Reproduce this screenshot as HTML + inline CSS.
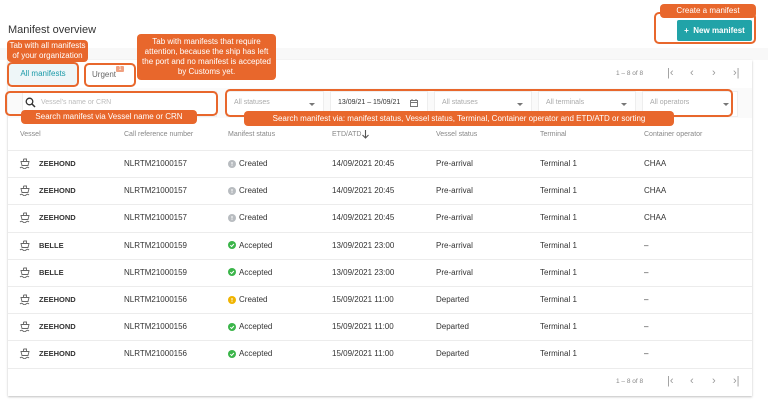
<!DOCTYPE html>
<html><head><meta charset="utf-8"><style>
*{margin:0;padding:0;box-sizing:border-box}
body{width:768px;height:402px;background:#fff;font-family:"Liberation Sans",sans-serif;position:relative;overflow:hidden;color:#333}
.a{position:absolute;white-space:nowrap}
.or{background:#e8672c;color:#fff;border-radius:4px;text-align:center;font-size:8px;line-height:10px}
.ob{border:2.5px solid #e8672c;border-radius:5px}
.h{font-size:7px;color:#888}
.c{font-size:8px;color:#333}
.sel{background:#fff;border:1px solid #eee;font-size:7px;color:#aaa;padding:7px 7px;height:26px}
.sel b{position:absolute;right:8px;top:11px;border:3px solid transparent;border-top:3px solid #777}
.row{position:absolute;left:8px;width:744px;height:27px;border-top:1px solid #ececec}
.pg{font-size:11px;color:#999}
</style></head><body>
<div class="a" style="left:0;top:48px;width:768px;height:12px;background:#f8f8f8"></div>
<div class="a" style="left:8px;top:24px;font-size:11px;color:#333">Manifest overview</div>

<div class="a" style="left:8px;top:60px;width:744px;height:336px;background:#fff;box-shadow:0 1px 2px rgba(0,0,0,.25)"></div>
<div class="a" style="left:8px;top:88px;width:744px;height:30px;background:#fafafa"></div>
<div class="a" style="left:8px;top:62px;width:70px;height:24px;background:#eef6f8;color:#1a9aa8;font-size:8px;text-align:center;line-height:24px">All manifests</div>
<div class="a" style="left:92px;top:70px;font-size:8px;color:#666">Urgent</div>
<div class="a" style="left:116px;top:66px;width:8px;height:6px;background:#f0a080;border-radius:1px;font-size:5px;color:#fff;text-align:center;line-height:6px">1</div>

<div class="a" style="left:616px;top:70px;font-size:6.5px;color:#888">1 – 8 of 8</div>
<div class="a pg" style="left:667px;top:67px">|‹</div>
<div class="a pg" style="left:690px;top:67px">‹</div>
<div class="a pg" style="left:712px;top:67px">›</div>
<div class="a pg" style="left:733px;top:67px">›|</div>

<div class="a sel" style="left:22px;top:91px;width:195px;color:#bbb;padding-left:18px">Vessel's name or CRN</div>
<svg class="a" style="left:25px;top:97px" width="11" height="11" viewBox="0 0 11 11"><circle cx="4.5" cy="4.5" r="3.3" fill="none" stroke="#333" stroke-width="1.3"/><path d="M7 7l3 3" stroke="#333" stroke-width="1.5"/></svg>
<div class="a sel" style="left:226px;top:91px;width:98px">All statuses<b></b></div>
<div class="a sel" style="left:330px;top:91px;width:98px;color:#333">13/09/21 – 15/09/21</div>
<svg class="a" style="left:410px;top:99px" width="8" height="8" viewBox="0 0 8 8"><rect x="0.5" y="1.5" width="7" height="6" fill="none" stroke="#777"/><path d="M0.5 3.5h7M2 0v2M6 0v2" stroke="#777"/></svg>
<div class="a sel" style="left:434px;top:91px;width:98px">All statuses<b></b></div>
<div class="a sel" style="left:538px;top:91px;width:98px">All terminals<b></b></div>
<div class="a sel" style="left:642px;top:91px;width:96px">All operators<b></b></div>

<div class="a h" style="left:20px;top:131px">Vessel</div>
<div class="a h" style="left:124px;top:131px">Call reference number</div>
<div class="a h" style="left:228px;top:131px">Manifest status</div>
<div class="a h" style="left:332px;top:131px">ETD/ATD</div>
<svg class="a" style="left:362px;top:130px" width="7" height="9" viewBox="0 0 7 9"><path d="M3.5 0v8M0.5 5l3 3 3-3" stroke="#555" stroke-width="1.1" fill="none"/></svg>
<div class="a h" style="left:436px;top:131px">Vessel status</div>
<div class="a h" style="left:540px;top:131px">Terminal</div>
<div class="a h" style="left:644px;top:131px">Container operator</div>

<div id="rows"></div>
<div class="row" style="top:368px;height:28px"></div>
<div class="a" style="left:616px;top:378px;font-size:6.5px;color:#888">1 – 8 of 8</div>
<div class="a pg" style="left:667px;top:375px">|‹</div>
<div class="a pg" style="left:690px;top:375px">‹</div>
<div class="a pg" style="left:712px;top:375px">›</div>
<div class="a pg" style="left:733px;top:375px">›|</div>

<script>
var d=[["ZEEHOND","NLRTM21000157","i","Created","14/09/2021 20:45","Pre-arrival","CHAA"],
["ZEEHOND","NLRTM21000157","i","Created","14/09/2021 20:45","Pre-arrival","CHAA"],
["ZEEHOND","NLRTM21000157","i","Created","14/09/2021 20:45","Pre-arrival","CHAA"],
["BELLE","NLRTM21000159","a","Accepted","13/09/2021 23:00","Pre-arrival","–"],
["BELLE","NLRTM21000159","a","Accepted","13/09/2021 23:00","Pre-arrival","–"],
["ZEEHOND","NLRTM21000156","w","Created","15/09/2021 11:00","Departed","–"],
["ZEEHOND","NLRTM21000156","a","Accepted","15/09/2021 11:00","Departed","–"],
["ZEEHOND","NLRTM21000156","a","Accepted","15/09/2021 11:00","Departed","–"]];
var h="";
d.forEach(function(r,i){
 var t=150+i*27.2;
 h+='<div class="row" style="top:'+t+'px"></div>';
 var y=t+9;
 h+='<svg class="a" style="left:19px;top:'+(y-1)+'px" width="12" height="11" viewBox="0 0 12 11"><path d="M4.5 1h3v2.5M4.5 1v2.5M2 3.5h8l-1 4H3z" fill="none" stroke="#666" stroke-width="0.9"/><path d="M1 10c1-1 2-1 3 0s2 1 3 0 2-1 3 0" fill="none" stroke="#666" stroke-width="0.9"/></svg>';
 h+='<div class="a c" style="left:39px;top:'+y+'px;font-weight:bold;font-size:7.5px">'+r[0]+'</div>';
 h+='<div class="a c" style="left:124px;top:'+y+'px">'+r[1]+'</div>';
 var col=r[2]=="i"?"#b8bcc0":r[2]=="a"?"#3bb54a":"#f0b400";
 var g=r[2]=="a"?'<path d="M2.3 4.2l1.3 1.3 2.3-2.5" stroke="#fff" stroke-width="1" fill="none"/>':'<path d="M4 2v2.5M4 5.3v.8" stroke="#fff" stroke-width="1"/>';
 h+='<svg class="a" style="left:228px;top:'+(y+0.5)+'px" width="8" height="8" viewBox="0 0 8 8"><circle cx="4" cy="4" r="4" fill="'+col+'"/>'+g+'</svg>';
 h+='<div class="a c" style="left:239px;top:'+y+'px">'+r[3]+'</div>';
 h+='<div class="a c" style="left:332px;top:'+y+'px">'+r[4]+'</div>';
 h+='<div class="a c" style="left:436px;top:'+y+'px">'+r[5]+'</div>';
 h+='<div class="a c" style="left:540px;top:'+y+'px">Terminal 1</div>';
 h+='<div class="a c" style="left:644px;top:'+y+'px">'+r[6]+'</div>';
});
document.getElementById("rows").innerHTML=h;
</script>

<div class="a ob" style="left:7px;top:62px;width:72px;height:25px"></div>
<div class="a ob" style="left:84px;top:63px;width:52px;height:24px"></div>
<div class="a ob" style="left:5px;top:91px;width:213px;height:25px"></div>
<div class="a ob" style="left:225px;top:89px;width:508px;height:28px"></div>
<div class="a ob" style="left:654px;top:12px;width:102px;height:32px"></div>
<div class="a or" style="left:7px;top:40px;width:81px;height:22px;padding-top:1px">Tab with all manifests<br>of your organization</div>
<div class="a or" style="left:137px;top:34px;width:139px;height:46px;padding-top:3px">Tab with manifests that require<br>attention, because the ship has left<br>the port and no manifest is accepted<br>by Customs yet.</div>
<div class="a or" style="left:21px;top:110px;width:176px;height:14px;line-height:14px">Search manifest via Vessel name or CRN</div>
<div class="a or" style="left:244px;top:111px;width:430px;height:15px;line-height:15px">Search manifest via: manifest status, Vessel status, Terminal, Container operator and ETD/ATD or sorting</div>
<div class="a or" style="left:660px;top:4px;width:96px;height:14px;line-height:14px">Create a manifest</div>
<div class="a" style="left:677px;top:20px;width:75px;height:21px;background:#21a3a8;border-radius:2px;color:#fff;font-size:8px;font-weight:bold;text-align:center;line-height:21px">+&nbsp; New manifest</div>
</body></html>
